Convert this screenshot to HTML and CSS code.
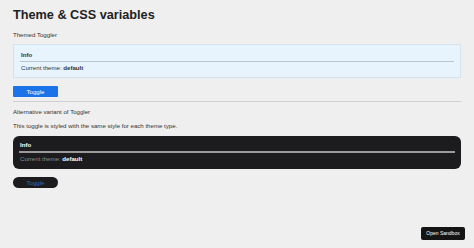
FILE: index.html
```html
<!DOCTYPE html>
<html>
<head>
<meta charset="utf-8">
<link rel="stylesheet" href="styles.css">
</head>
<body>
<h1 class="title">Theme &amp; CSS variables</h1>
<p class="text first">Themed Toggler</p>
<div class="info light">
  <div class="info-head">Info</div>
  <div class="info-body">Current theme: <b>default</b></div>
</div>
<button class="toggle blue">Toggle</button>
<hr class="rule">
<p class="text alt">Alternative variant of Toggler</p>
<p class="text alt">This toggle is styled with the same style for each theme type.</p>
<div class="info dark">
  <div class="info-head">Info</div>
  <div class="info-body">Current theme: <b>default</b></div>
</div>
<button class="toggle pill">Toggle</button>
<button class="sandbox">Open Sandbox</button>
</body>
</html>
```
FILE: styles.css
```css
html, body {
  margin: 0;
  padding: 0;
  background: #efefef;
}
body {
  padding: 0 13px;
  font-family: "Liberation Sans", Arial, sans-serif;
  font-size: 6.1px;
  line-height: 8px;
  color: #333;
  height: 248px;
  box-sizing: border-box;
  overflow: hidden;
}
.title {
  margin: 8px 0 0;
  font-size: 12.7px;
  line-height: 15px;
  font-weight: bold;
  color: #222;
}
.text {
  margin: 0;
}
.first {
  margin-top: 8px;
}
.alt {
  margin-top: 6px;
}
.info {
  margin-top: 5px;
  padding: 0 6px;
}
.info-head {
  font-weight: bold;
}
.light {
  background: #e7f3fd;
  border: 1px solid #d3e3ef;
}
.light .info-head {
  padding: 6px 1px 2px;
  border-bottom: 1px solid #b9c6d0;
  color: #333;
}
.light .info-body {
  padding: 2px 1px 5px;
}
.dark {
  margin-top: 6px;
  background: #1c1c1e;
  border-radius: 6px;
  color: #8a8a8a;
}
.dark .info-head {
  padding: 5px 1px 2px;
  border-bottom: 2px solid #9a9a9a;
  color: #fff;
}
.dark .info-body {
  padding: 2px 1px 6px;
}
.dark b {
  color: #fff;
}
.toggle {
  display: block;
  margin: 8px 0 0;
  width: 45px;
  height: 11px;
  padding: 0;
  border: none;
  font-family: "Liberation Sans", Arial, sans-serif;
  font-size: 6.1px;
  line-height: 11px;
}
.blue {
  background: #1a73e8;
  color: #fff;
  border-radius: 1px;
}
.pill {
  background: #1c1c1e;
  color: #2c68c8;
  border-radius: 6px;
}
.rule {
  margin: 4px 0 0;
  border: none;
  border-top: 1px solid #cfcfcf;
  height: 0;
}
.sandbox {
  position: fixed;
  left: 421px;
  top: 227px;
  width: 44px;
  height: 13px;
  padding: 0;
  border: none;
  border-radius: 2px;
  background: #141414;
  color: #fff;
  font-family: "Liberation Sans", Arial, sans-serif;
  font-size: 5px;
  line-height: 13px;
}
```
